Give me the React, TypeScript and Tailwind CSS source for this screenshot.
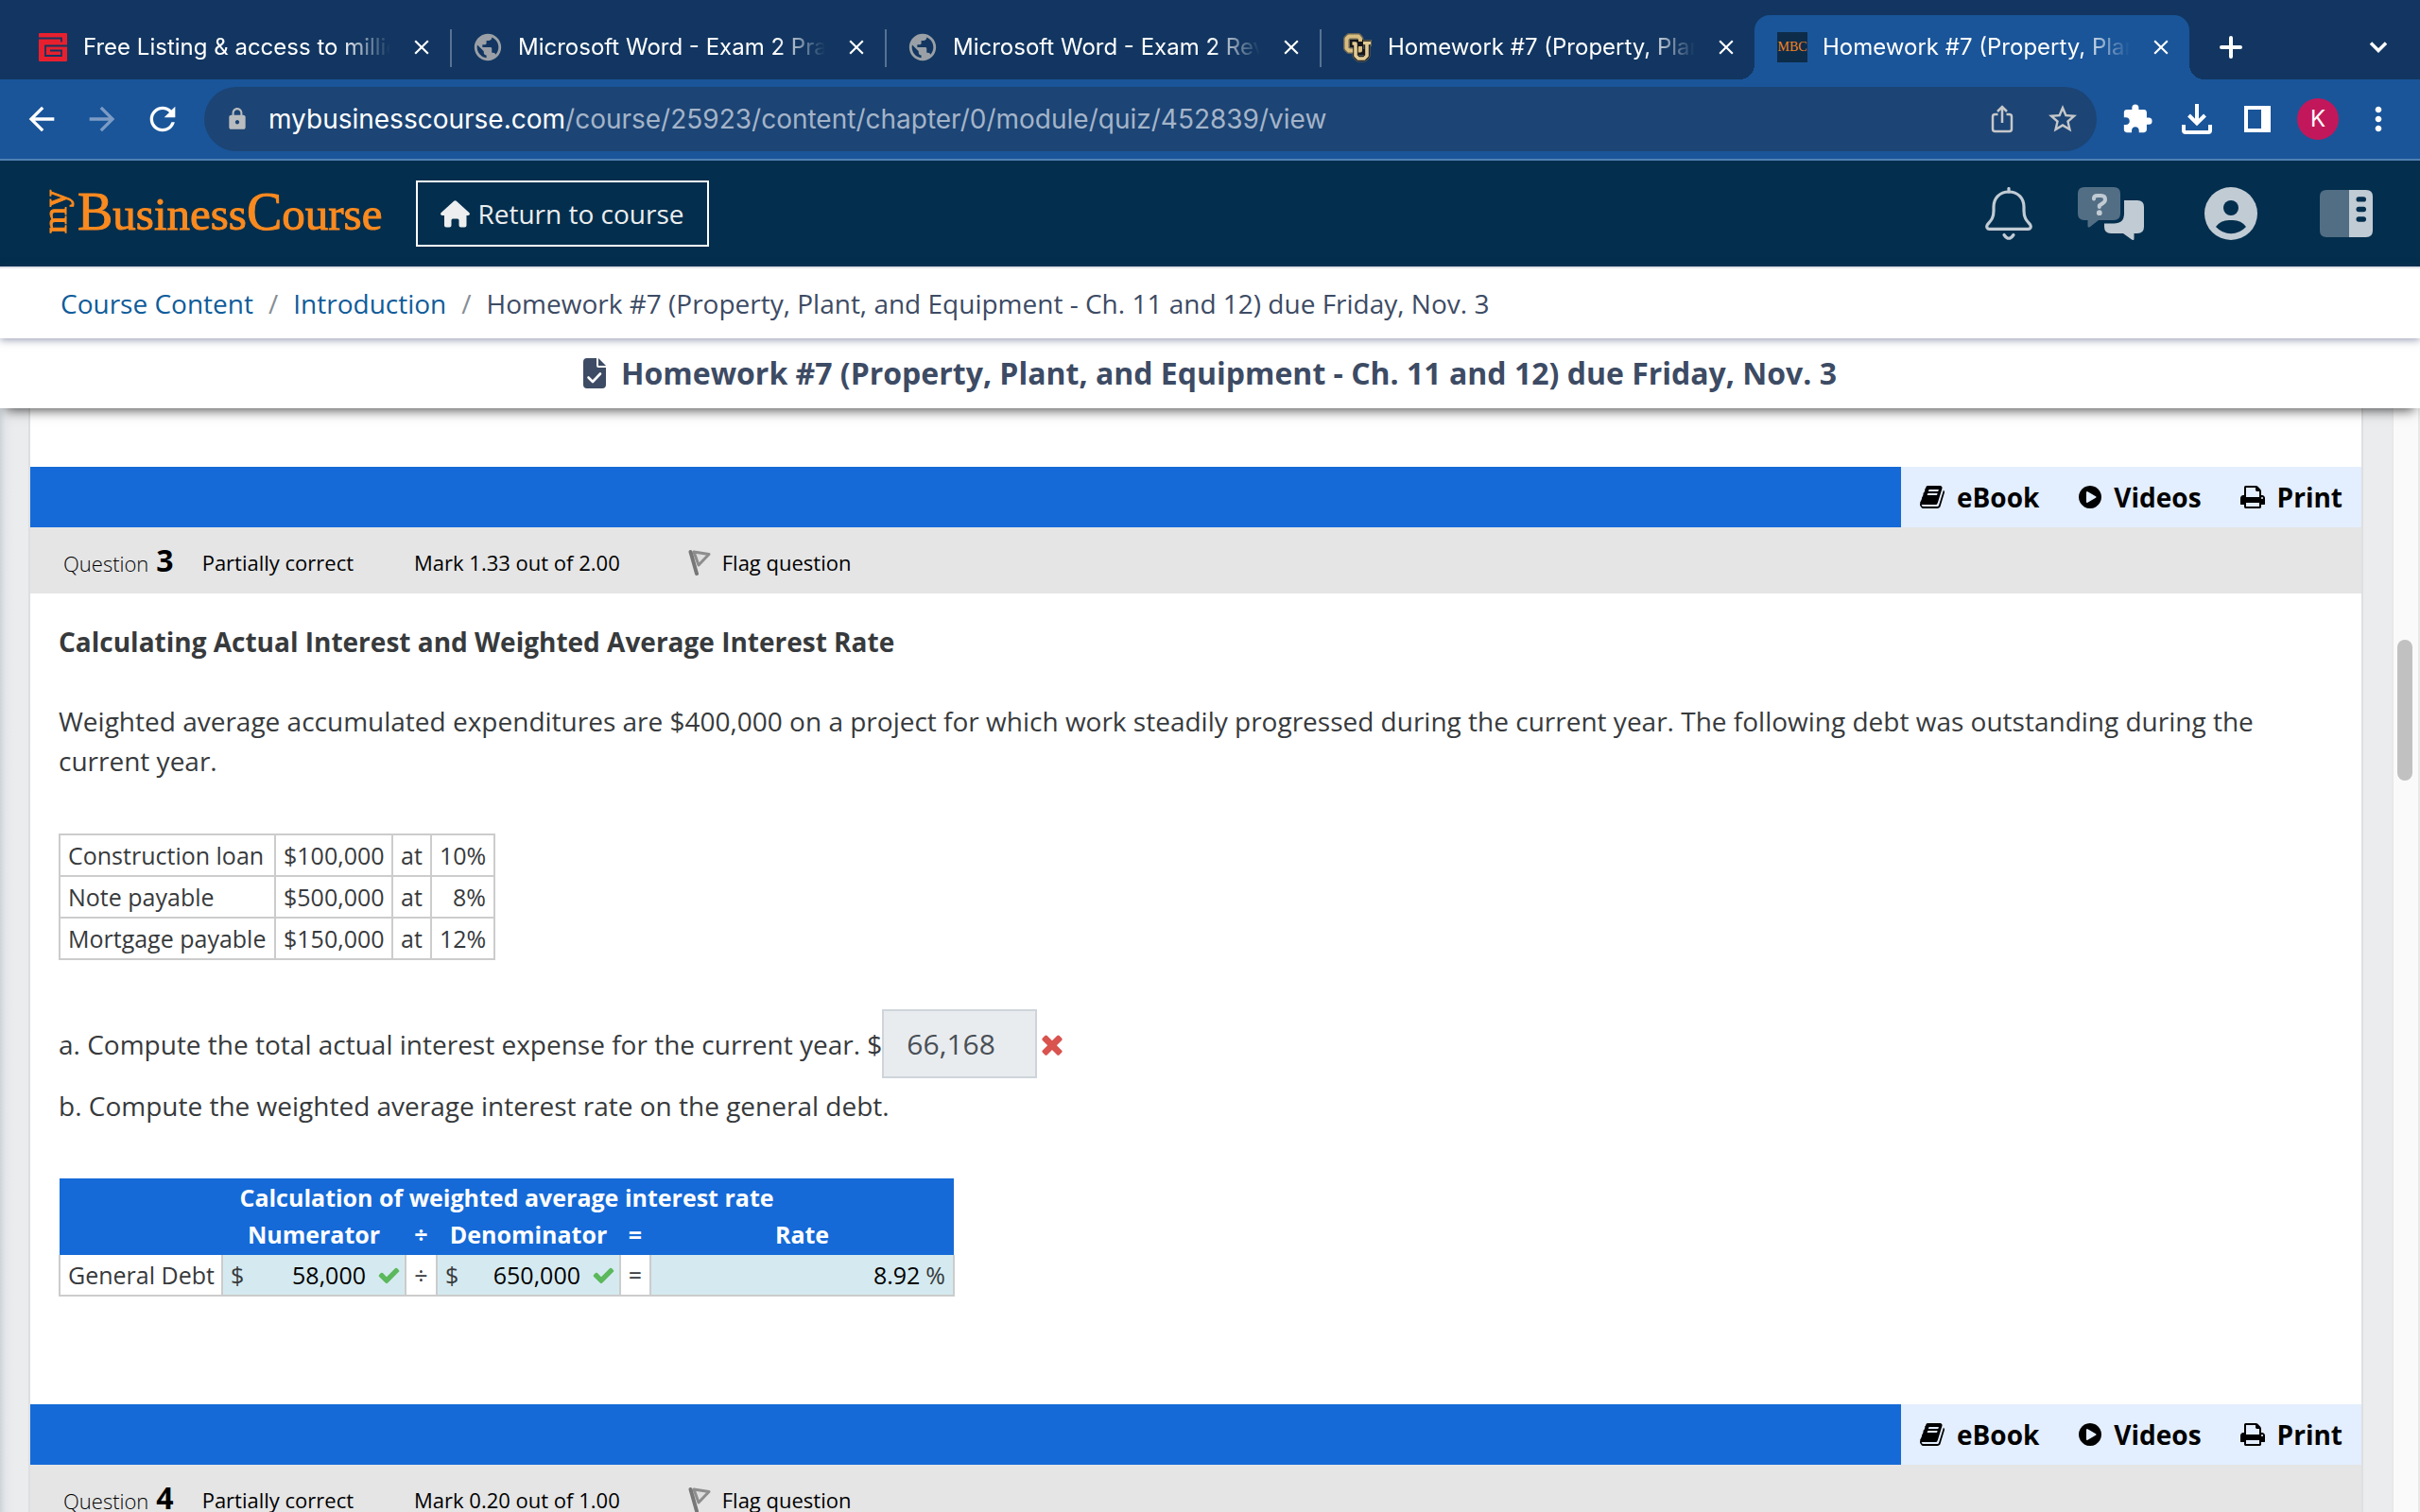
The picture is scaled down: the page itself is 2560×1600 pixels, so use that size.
import type { ReactNode } from "react";
import {
  MdArrowBack,
  MdArrowForward,
  MdClose,
  MdExtension,
  MdLock,
  MdMoreVert,
  MdPublic,
  MdRefresh,
  MdStarBorder,
} from "react-icons/md";

/* ---------- icons ---------- */

function BrandFavicon() {
  return (
    <svg width="32" height="32" viewBox="0 0 32 32" className="shrink-0">
      <rect x="1" y="1" width="30" height="30" rx="1" fill="#e8202e" />
      <path d="M1 6.500H25V10.500M31 14.500H8V25H25V19.500H13" fill="none" stroke="#123661" strokeWidth="1.800" />
    </svg>
  );
}

function CuFavicon() {
  return (
    <svg width="32" height="32" viewBox="0 0 32 32" className="shrink-0">
      <g fill="none" strokeLinejoin="round">
        <path d="M19 10V7L17 4.500H7L4.500 7V17L7 19.500H14" stroke="#6b6455" strokeWidth="7" />
        <path d="M10.500 12H14V25L17 28H23L26 25V12M22 11.500H31" stroke="#6b6455" strokeWidth="7" />
        <path d="M8 8H22V18H26V24H17V16H8Z" fill="#16171c" />
        <path d="M19 10V7L17 4.500H7L4.500 7V17L7 19.500H19V15" stroke="#d8bd80" strokeWidth="4" />
        <path d="M10.500 12H14V25L17 28H23L26 25V12M22 11.500H30" stroke="#16171c" strokeWidth="5.500" />
        <path d="M10.500 12H14V25L17 28H23L26 25V12M22 11.500H30" stroke="#e3cb94" strokeWidth="3.600" />
      </g>
    </svg>
  );
}

function MbcFavicon() {
  return (
    <span className="flex h-8 w-8 shrink-0 items-center justify-center bg-[#0d2c49] font-['Liberation_Serif',serif] text-[14px] leading-none text-[#f58220]">
      MBC
    </span>
  );
}

function GlobeFavicon() {
  return (
    <span className="flex h-8 w-8 shrink-0 items-center justify-center">
      <MdPublic size={34} className="shrink-0 text-[#9aa0a6]" />
    </span>
  );
}

function ShareIcon() {
  return (
    <svg width="24" height="30" viewBox="0 0 24 30" fill="none" stroke="#c6c8c9" strokeWidth="2.500">
      <path d="M7.500 10H4.500Q2 10 2 12.500V25.500Q2 28 4.500 28H19.500Q22 28 22 25.500V12.500Q22 10 19.500 10H16.500" />
      <path d="M12 19V3M7 7L12 2L17 7" />
    </svg>
  );
}

function DownloadIcon() {
  return (
    <svg width="32" height="32" viewBox="0 0 32 32" fill="none" stroke="#fff" strokeWidth="4">
      <path d="M16 0V19M7.500 12L16 20.500L24.500 12" />
      <path d="M2 22V28Q2 30 4 30H28Q30 30 30 28V22" />
    </svg>
  );
}

function HouseIcon() {
  return (
    <svg width="31" height="29" viewBox="0 0 31 29" fill="#eceeef" className="shrink-0">
      <path d="M14.200 .8Q15.500-.4 16.800 .8L30.300 13Q31.400 14.200 30.600 15.300Q30 16 29 16H27.500V26.500Q27.500 28.500 25.500 28.500H21.500Q19.500 28.500 19.500 26.500V21Q19.500 19.500 18 19.500H13Q11.500 19.500 11.500 21V26.500Q11.500 28.500 9.500 28.500H6Q4 28.500 4 26.500V16H2Q1 16 .4 15.300Q-.4 14.200 .7 13Z" />
    </svg>
  );
}

function BellIcon() {
  return (
    <svg width="50" height="56" viewBox="0 0 50 56" fill="none" stroke="#c1cbd4" strokeWidth="3.200" strokeLinecap="round">
      <path d="M25 1.500V5" />
      <path d="M25 5C15 5 9 12 9 21V25C9 33 6 35.500 2.500 39.500C1 42 2 44.400 4.500 44.400H45.500C48 44.400 49 42 47.500 39.500C44 35.500 41 33 41 25V21C41 12 35 5 25 5Z" />
      <path d="M20 50.500Q25 58 30 50.500" />
    </svg>
  );
}

function MessagesIcon() {
  return (
    <svg width="70" height="56" viewBox="0 0 70 56">
      <path d="M7 0H38Q45 0 45 7V28Q45 35 38 35H22L13 42Q10.500 43.500 10.500 41V35H7Q0 35 0 28V7Q0 0 7 0Z" fill="#526e84" />
      <path d="M49 14H63Q70 14 70 21V42Q70 49 63 49H59.500V54.500Q59.500 57 57 55.500L48 49H35Q28 49 28 42V38.500H38Q49 38.500 49 28Z" fill="#c1cbd4" />
      <path d="M17 12.500Q16.500 9 21 9H24.500Q29 9 29 13Q29 15.500 26.500 17L22.800 19.500V21" fill="none" stroke="#c1cbd4" strokeWidth="4" strokeLinecap="round" strokeLinejoin="round" />
      <circle cx="22.800" cy="27.200" r="2.900" fill="#c1cbd4" />
    </svg>
  );
}

function UserIcon() {
  return (
    <svg width="56" height="56" viewBox="0 0 56 56">
      <circle cx="28" cy="28" r="28" fill="#c1cbd4" />
      <circle cx="28" cy="22" r="8" fill="#032e4d" />
      <path d="M12 42Q17 35 26 35H30Q39 35 44 42Q37 49.300 28 49.300T12 42Z" fill="#032e4d" />
    </svg>
  );
}

function SidebarIcon() {
  return (
    <svg width="56" height="50" viewBox="0 0 56 50">
      <path d="M7 0H31V50H7Q0 50 0 43V7Q0 0 7 0Z" fill="#526e84" />
      <path d="M31 0H49Q56 0 56 7V43Q56 50 49 50H31Z" fill="#c1cbd4" />
      <g fill="#032e4d">
        <rect x="38.500" y="7.200" width="10.500" height="5.400" rx="2.700" />
        <rect x="38.500" y="17.800" width="10.500" height="5.400" rx="2.700" />
        <rect x="38.500" y="28.300" width="10.500" height="5.400" rx="2.700" />
      </g>
    </svg>
  );
}

function QuizIcon() {
  return (
    <svg width="24" height="32" viewBox="0 0 24 32" className="shrink-0">
      <path d="M4 0H14V8Q14 10 16 10H24V28Q24 32 20 32H4Q0 32 0 28V4Q0 0 4 0Z" fill="#3d4b64" />
      <path d="M16 0L24 8H16Z" fill="#3d4b64" />
      <path d="M5.500 20.500L10 25L18 16.500" fill="none" stroke="#fff" strokeWidth="2.600" strokeLinecap="round" strokeLinejoin="round" />
    </svg>
  );
}

function FlagIcon() {
  return (
    <svg width="26" height="28" viewBox="0 0 26 28" fill="none">
      <path d="M6 3L22 5.500L11 17Z" fill="#dedede" stroke="#8d8d8d" strokeWidth="3" strokeLinejoin="round" />
      <path d="M2.500 3L9 26" stroke="#777" strokeWidth="4" strokeLinecap="round" />
    </svg>
  );
}

function Glyph({ d, size, className = "" }: { d: string; size: number; className?: string }) {
  return (
    <svg width={size} height={size} viewBox="0 0 1792 1792" fill="currentColor" className={`shrink-0 ${className}`}>
      <path d={d} />
    </svg>
  );
}

const CHECK =
  "M1671 566q0 40-28 68l-724 724-136 136q-28 28-68 28t-68-28l-136-136-362-362q-28-28-28-68t28-68l136-136q28-28 68-28t68 28l294 295 656-657q28-28 68-28t68 28l136 136q28 28 28 68z";
const TIMES =
  "M1490 1322q0 40-28 68l-136 136q-28 28-68 28t-68-28l-294-294-294 294q-28 28-68 28t-68-28l-136-136q-28-28-28-68t28-68l294-294-294-294q-28-28-28-68t28-68l136-136q28-28 68-28t68 28l294 294 294-294q28-28 68-28t68 28l136 136q28 28 28 68t-28 68l-294 294 294 294q28 28 28 68z";
const PLAY =
  "M896 128q209 0 385.500 103t279.500 279.500 103 385.500-103 385.500-279.500 279.500-385.500 103-385.500-103-279.500-279.500-103-385.500 103-385.500 279.500-279.500 385.500-103zm384 823q32-18 32-55t-32-55l-544-320q-31-19-64-1-32 19-32 56v640q0 37 32 56 16 8 32 8 17 0 32-9z";
const BOOK =
  "M1703 478q40 57 18 129l-275 906q-19 64-76.500 107.500t-122.500 43.500h-923q-77 0-148.500-53.500t-99.500-131.500q-24-67-2-127 0-4 3-27t4-37q1-8-3-21.500t-3-19.500q2-11 8-21t16.500-23.500 16.500-23.500q23-38 45-91.500t30-91.500q3-10 .5-30t-.5-28q3-11 17-28t17-23q21-36 42-92t25-90q1-9-2.500-32t.5-28q4-13 22-30.500t22-22.500q19-26 42.500-84.500t27.500-96.500q1-8-3-25.500t-2-26.500q2-8 9-18t18-23 17-21q8-12 16.500-30.500t15-35 16-36 19.500-32 26.500-23.500 36-11.500 47.500 5.500l-1 3q38-9 51-9h761q74 0 114 56t18 130l-274 906q-36 119-71.500 153.500t-128.500 34.500h-869q-27 0-38 15-11 16-1 43 24 70 144 70h923q29 0 56-15.500t35-41.500l300-987q7-22 5-57 38 15 59 43zm-1064 2q-4 13 2 22.500t20 9.500h608q13 0 25.500-9.500t16.500-22.500l21-64q4-13-2-22.500t-20-9.500h-608q-13 0-25.500 9.500t-16.500 22.500zm-83 256q-4 13 2 22.500t20 9.500h608q13 0 25.500-9.500t16.500-22.500l21-64q4-13-2-22.500t-20-9.500h-608q-13 0-25.500 9.500t-16.500 22.500z";
const PRINT =
  "M448 1536h896v-256h-896v256zm0-640h896v-384h-160q-40 0-68-28t-28-68v-160h-640v640zm1152 64q0-26-19-45t-45-19-45 19-19 45 19 45 45 19 45-19 19-45zm128 0v416q0 13-9.500 22.500t-22.500 9.500h-224v160q0 40-28 68t-68 28h-960q-40 0-68-28t-28-68v-160h-224q-13 0-22.500-9.500t-9.500-22.500v-416q0-79 56.500-135.500t135.500-56.500h64v-544q0-40 28-68t68-28h672q40 0 88 20t76 48l152 152q28 28 48 76t20 88v256h64q79 0 135.500 56.500t56.500 135.500z";

/* ---------- browser window ---------- */

function Tab({ icon, title, active, divider }: { icon: ReactNode; title: string; active?: boolean; divider?: boolean }) {
  return (
    <div
      className={`relative flex h-[68px] w-[460px] min-w-0 items-center pl-6 pr-[17px] ${
        active ? "rounded-t-2xl bg-[#1a5599]" : ""
      }`}
    >
      {icon}
      <button className="ml-4 min-w-0 flex-1 overflow-hidden whitespace-nowrap text-left text-[24px] leading-8 text-white [mask-image:linear-gradient(to_right,black_calc(100%-52px),transparent)]">
        {title}
      </button>
      <button aria-label="Close tab" className="ml-5 text-white">
        <MdClose size={26} />
      </button>
      {divider && <span className="absolute -right-0.5 top-[15px] h-10 w-0.5 bg-[#587293]" />}
      {active && (
        <>
          <span className="absolute -left-4 bottom-0 size-4 bg-[radial-gradient(circle_at_0_0,transparent_16px,#1a5599_16px)]" />
          <span className="absolute -right-4 bottom-0 size-4 bg-[radial-gradient(circle_at_100%_0,transparent_16px,#1a5599_16px)]" />
        </>
      )}
    </div>
  );
}

function BrowserChrome() {
  return (
    <div className="font-[Inter,sans-serif]">
      <div className="flex items-end bg-[#123661] pl-4 pr-8 pt-4">
        <Tab icon={<BrandFavicon />} title="Free Listing & access to millions" divider />
        <Tab icon={<GlobeFavicon />} title="Microsoft Word - Exam 2 Practice" divider />
        <Tab icon={<GlobeFavicon />} title="Microsoft Word - Exam 2 Review" divider />
        <Tab icon={<CuFavicon />} title="Homework #7 (Property, Plant" />
        <Tab icon={<MbcFavicon />} title="Homework #7 (Property, Plant" active />
        <div className="flex h-[68px] flex-1 items-center justify-between pl-8">
          <button aria-label="New tab">
            <svg width="24" height="24" viewBox="0 0 24 24" stroke="#fff" strokeWidth="4" strokeLinecap="round">
              <path d="M12 2V22M2 12H22" />
            </svg>
          </button>
          <button aria-label="Search tabs">
            <svg width="24" height="24" viewBox="0 0 24 24" fill="none" stroke="#fff" strokeWidth="3.500">
              <path d="M4 7.500L12 15.500L20 7.500" />
            </svg>
          </button>
        </div>
      </div>
      <div className="flex items-center border-b-2 border-[#4f80b4] bg-[#1a5599] px-6 py-2 text-white">
        <button aria-label="Back" className="mr-6">
          <MdArrowBack size={40} />
        </button>
        <button aria-label="Forward" className="mr-6 text-[#7c9cc5]">
          <MdArrowForward size={40} />
        </button>
        <button aria-label="Reload" className="mr-6">
          <MdRefresh size={40} />
        </button>
        <div className="flex h-[68px] min-w-0 flex-1 items-center rounded-full bg-[#1c4474] pl-[22px] pr-[18px]">
          <MdLock size={26} className="mr-5 shrink-0 text-[#b9bcbf]" />
          <div role="textbox" aria-label="Address" className="min-w-0 flex-1 truncate text-[28px] leading-10 text-[#a4b4c9]">
            <span className="text-white">mybusinesscourse.com</span>/course/25923/content/chapter/0/module/quiz/452839/view
          </div>
          <button aria-label="Share" className="mr-[34px]">
            <ShareIcon />
          </button>
          <button aria-label="Bookmark" className="text-[#c6c8c9]">
            <MdStarBorder size={36} />
          </button>
        </div>
        <div className="ml-[26px] flex items-center">
          <button aria-label="Extensions" className="mr-[30px]">
            <MdExtension size={34} />
          </button>
          <button aria-label="Downloads" className="mr-[34px]">
            <DownloadIcon />
          </button>
          <button aria-label="Side panel" className="mr-7 h-7 w-7 border-4 border-r-[10px] border-white" />
          <button aria-label="Profile" className="mr-[22px] size-11 rounded-full bg-[#c2185b] text-[24px] leading-none">
            K
          </button>
          <button aria-label="Menu">
            <MdMoreVert size={40} />
          </button>
        </div>
      </div>
    </div>
  );
}

/* ---------- site ---------- */

function SiteHeader() {
  return (
    <header className="flex h-28 items-center bg-[#032e4d] pl-[42px] pr-[50px]">
      <a href="#" className="flex items-center pb-1 font-['Liberation_Serif',serif] leading-none text-[#fa8a1f] [-webkit-text-stroke:1px_#fa8a1f]">
        <span className="mr-2 rotate-180 text-[36px] leading-8 [writing-mode:vertical-rl]">my</span>
        <span className="text-[49px]">
          <span className="text-[56px]">B</span>usiness<span className="text-[56px]">C</span>ourse
        </span>
      </a>
      <button className="ml-9 flex h-[70px] items-center gap-2 border-2 border-white px-6 text-[28px] text-[#eceeef]">
        <HouseIcon />
        Return to course
      </button>
      <div className="ml-auto flex items-center">
        <button aria-label="Notifications" className="mr-12">
          <BellIcon />
        </button>
        <button aria-label="Help and messages" className="mr-16">
          <MessagesIcon />
        </button>
        <button aria-label="Account" className="mr-[66px]">
          <UserIcon />
        </button>
        <button aria-label="Toggle sidebar">
          <SidebarIcon />
        </button>
      </div>
    </header>
  );
}

const TITLE = "Homework #7 (Property, Plant, and Equipment - Ch. 11 and 12) due Friday, Nov. 3";

function Breadcrumbs() {
  return (
    <nav className="relative z-20 flex h-[76px] items-center border-t-2 border-[#dfe3e8] bg-white pl-16 text-[28px] text-[#3d4b64] shadow-[0_2px_8px_rgba(60,70,110,0.5)]">
      <a href="#" className="text-[#0f5c9a]">Course Content</a>
      <span className="mx-4 text-[#868e96]">/</span>
      <a href="#" className="text-[#0f5c9a]">Introduction</a>
      <span className="mx-4 text-[#868e96]">/</span>
      <span>{TITLE}</span>
    </nav>
  );
}

function QuestionBar({ number, mark }: { number: number; mark: string }) {
  return (
    <div>
      <div className="flex justify-end bg-[#156ad7]">
        <div className="flex h-16 items-center bg-[#e3eefe] pl-[19px] pr-5 text-[28px] font-bold text-black">
          <a href="#" className="mr-10 flex items-center gap-3">
            <Glyph d={BOOK} size={28} />
            eBook
          </a>
          <a href="#" className="mr-10 flex items-center gap-[11px]">
            <Glyph d={PLAY} size={28} />
            Videos
          </a>
          <a href="#" className="flex items-center gap-3">
            <Glyph d={PRINT} size={28} />
            Print
          </a>
        </div>
      </div>
      <div className="flex h-[70px] items-center bg-[#e5e5e5] pl-[35px] pt-1 text-[22px] text-black">
        <h2 className="mr-[30px] flex items-baseline gap-2 pb-1 font-light">
          Question <span className="text-[32px] font-bold leading-10">{number}</span>
        </h2>
        <span className="mr-16">Partially correct</span>
        <span className="mr-[72px]">{mark}</span>
        <button className="flex items-center gap-2.5">
          <FlagIcon />
          Flag question
        </button>
      </div>
    </div>
  );
}

const DEBTS = [
  ["Construction loan", "$100,000", "at", "10%"],
  ["Note payable", "$500,000", "at", "8%"],
  ["Mortgage payable", "$150,000", "at", "12%"],
];

function DebtTable() {
  return (
    <table className="w-[462px] table-fixed border-collapse text-[25px] leading-[42px]">
      <colgroup>
        <col className="w-[228px]" />
        <col className="w-[124px]" />
        <col className="w-[41px]" />
        <col />
      </colgroup>
      <tbody>
        {DEBTS.map((row) => (
          <tr key={row[0]}>
            {row.map((cell, i) => (
              <td key={i} className={`border-2 border-[#ccc] px-2 py-0 whitespace-nowrap ${i === 3 ? "text-right" : ""}`}>
                {cell}
              </td>
            ))}
          </tr>
        ))}
      </tbody>
    </table>
  );
}

function AnswerCell({ label, value }: { label: string; value: string }) {
  return (
    <td className="border-2 border-t-0 border-[#ccc] bg-[#d5eaf0] px-2 py-0">
      <label className="flex items-center">
        $
        <input readOnly aria-label={label} value={value} className="min-w-0 flex-1 bg-transparent text-right text-black outline-none" />
        <Glyph d={CHECK} size={25} className="-mr-1 ml-3 text-[#5cb85c]" />
      </label>
    </td>
  );
}

function RateTable() {
  return (
    <table className="w-[948px] table-fixed border-collapse text-[25px] leading-[42px]">
      <colgroup>
        <col className="w-[172px]" />
        <col className="w-[194px]" />
        <col className="w-[33px]" />
        <col className="w-[194px]" />
        <col className="w-[32px]" />
        <col />
      </colgroup>
      <thead className="bg-[#156ad7] font-bold text-white">
        <tr>
          <th colSpan={6} className="p-0 leading-10">Calculation of weighted average interest rate</th>
        </tr>
        <tr className="leading-[38px]">
          <th className="p-0 pb-[3px]" />
          <th className="p-0 pb-[3px]">Numerator</th>
          <th className="p-0 pb-[3px]">÷</th>
          <th className="p-0 pb-[3px]">Denominator</th>
          <th className="p-0 pb-[3px]">=</th>
          <th className="p-0 pb-[3px]">Rate</th>
        </tr>
      </thead>
      <tbody>
        <tr>
          <td className="border-2 border-t-0 border-[#ccc] px-2 py-0 whitespace-nowrap">General Debt</td>
          <AnswerCell label="Numerator" value="58,000" />
          <td className="border-2 border-t-0 border-[#ccc] p-0 text-center">÷</td>
          <AnswerCell label="Denominator" value="650,000" />
          <td className="border-2 border-t-0 border-[#ccc] p-0 text-center">=</td>
          <td className="border-2 border-t-0 border-[#ccc] bg-[#d5eaf0] px-2 py-0">
            <label className="flex items-center gap-1.5">
              <input readOnly aria-label="Rate" value="8.92" className="min-w-0 flex-1 bg-transparent text-right text-black outline-none" />
              %
            </label>
          </td>
        </tr>
      </tbody>
    </table>
  );
}

function QuestionBody() {
  return (
    <div className="px-[30px] pb-[114px] pt-[30px] text-[28px] leading-[42px] text-[#373a3c]">
      <h3 className="mb-[42px] font-bold">Calculating Actual Interest and Weighted Average Interest Rate</h3>
      <p className="mb-14">
        Weighted average accumulated expenditures are $400,000 on a project for which work steadily progressed during the
        current year. The following debt was outstanding during the current year.
      </p>
      <DebtTable />
      <div className="mt-[52px] flex items-center">
        <label htmlFor="interest">a. Compute the total actual interest expense for the current year. $</label>
        <input
          id="interest"
          readOnly
          value="66,168"
          className="h-[73px] w-[164px] border-2 border-[#ced4da] bg-[#e9ecef] px-6 text-[30px] text-[#495057] outline-none"
        />
        <Glyph d={TIMES} size={32} className="text-[#d9534f]" />
      </div>
      <p className="mb-14 mt-2">b. Compute the weighted average interest rate on the general debt.</p>
      <RateTable />
    </div>
  );
}

export default function App() {
  return (
    <div className="flex h-screen flex-col overflow-hidden bg-[#ebecee] font-['Open_Sans',sans-serif]">
      <BrowserChrome />
      <SiteHeader />
      <Breadcrumbs />
      <div className="relative z-10 flex h-[74px] shrink-0 items-center justify-center gap-4 bg-white text-[#3d4b64] shadow-[0_8px_12px_-6px_rgba(0,0,0,0.7)]">
        <QuizIcon />
        <h1 className="text-[32px] font-bold">{TITLE}</h1>
      </div>
      <div className="flex min-h-0 flex-1">
        <div className="w-[30px] shrink-0 bg-linear-to-r from-[#cdd4d9] via-[#e4e7ea] via-20% to-[#ebecee] to-50%" />
        <main className="min-w-0 flex-1 overflow-hidden border-x-2 border-[#dedfe1] bg-white pt-[62px]">
          <QuestionBar number={3} mark="Mark 1.33 out of 2.00" />
          <QuestionBody />
          <QuestionBar number={4} mark="Mark 0.20 out of 1.00" />
        </main>
        <div className="ml-[30px] w-[30px] border-x-2 border-[#e8e8e8] bg-[#fafafa] pl-1 pt-[245px]">
          <div className="h-[149px] w-4 rounded-full bg-[#c1c1c1]" />
        </div>
      </div>
    </div>
  );
}
